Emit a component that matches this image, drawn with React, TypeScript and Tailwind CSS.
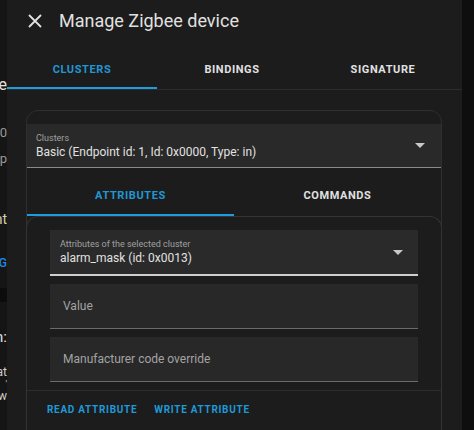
import React from "react";

function LeftStrip() {
  return (
    <div className="w-[7px] shrink-0 overflow-hidden bg-[#151515] flex flex-col items-end">
      <div className="h-[76px] shrink-0" />
      <div className="h-[18px] shrink-0 flex items-center justify-end text-[16px] text-[#e1e1e1] whitespace-nowrap">Title e</div>
      <div className="h-[30px] shrink-0 border-b border-[#222]" />
      <div className="h-[18px] shrink-0 flex items-center justify-end text-[13px] text-[#9a9a9a] whitespace-nowrap">x0</div>
      <div className="h-[8px] shrink-0" />
      <div className="h-[18px] shrink-0 flex items-center justify-end text-[13px] text-[#9a9a9a] whitespace-nowrap">op</div>
      <div className="h-[42px] shrink-0 border-b border-[#222]" />
      <div className="h-[18px] shrink-0 flex items-center justify-end text-[14px] text-[#d8cfae] whitespace-nowrap">ght</div>
      <div className="h-[26px] shrink-0 border-b border-[#222]" />
      <div className="h-[18px] shrink-0 flex items-center justify-end text-[12px] font-medium text-[#1e88e5] whitespace-nowrap">NG</div>
      <div className="h-[16px] shrink-0" />
      <div className="h-[14px] shrink-0 w-full bg-[#0c0c0c]" />
      <div className="h-[26px] shrink-0" />
      <div className="h-[18px] shrink-0 flex items-center justify-end text-[15px] text-[#e1e1e1] whitespace-nowrap">on:</div>
      <div className="h-[19px] shrink-0" />
      <div className="h-[14px] shrink-0 flex items-center justify-end text-[12px] leading-[14px] text-[#cfcfcf] whitespace-nowrap">at</div>
      <div className="h-[10px] shrink-0 flex items-start justify-end text-[9px] leading-[10px] text-[#cfcfcf] whitespace-nowrap">'</div>
      <div className="h-[14px] shrink-0 flex items-center justify-end text-[12px] leading-[14px] text-[#cfcfcf] whitespace-nowrap">w</div>
    </div>
  );
}

function Arrow() {
  return (
    <svg width="10" height="5" viewBox="0 0 10 5" className="shrink-0">
      <path d="M0 0 L10 0 L5 5 Z" fill="#c8c8c8" />
    </svg>
  );
}

export default function App() {
  return (
    <div className="flex w-[474px] h-[430px] overflow-hidden bg-[#0e0e0e] font-['Roboto',sans-serif]">
      <LeftStrip />
      <div className="w-[455px] shrink-0 bg-[#1c1c1c] flex flex-col">
        {/* header */}
        <div className="h-[50px] shrink-0 flex items-start pt-[9px]">
          <div className="w-[54px] pl-[2px] h-[24px] flex items-center justify-center">
            <svg width="14" height="14" viewBox="0 0 14 14">
              <path d="M1 1 L13 13 M13 1 L1 13" stroke="#e1e1e1" strokeWidth="1.8" />
            </svg>
          </div>
          <div className="text-[18px] leading-[24px] text-[#e1e1e1] -ml-[2px]">Manage Zigbee device</div>
        </div>
        {/* tabs */}
        <div className="h-[40px] shrink-0 flex border-b border-[#2c2c2c]">
          <div className="w-[150px] flex flex-col">
            <div className="flex-1 flex items-center justify-center pt-[3px] text-[11px] font-bold tracking-[0.6px] text-[#2196d3]">CLUSTERS</div>
            <div className="h-[2px] bg-[#1d9ddb]" />
          </div>
          <div className="w-[150px] flex items-center justify-center text-[11px] font-bold tracking-[0.6px] text-[#e1e1e1] pt-[1px]">BINDINGS</div>
          <div className="w-[152px] flex items-center justify-center text-[11px] font-bold tracking-[0.6px] text-[#e1e1e1] pt-[1px]">SIGNATURE</div>
        </div>
        {/* content */}
        <div className="pt-[20px] pl-[19px]">
          <div className="w-[416px] h-[400px] border border-[#2f2f2f] rounded-[12px] pt-[13px] flex flex-col">
            {/* clusters select */}
            <div className="h-[44px] shrink-0 bg-[#292929] border-b border-[#8a8a8a] flex items-center pl-[9px] pr-[16px]">
              <div className="flex-1 flex flex-col">
                <div className="text-[9px] leading-[12px] text-[#a0a0a0]">Clusters</div>
                <div className="text-[12px] leading-[16px] text-[#e1e1e1]">Basic (Endpoint id: 1, Id: 0x0000, Type: in)</div>
              </div>
              <Arrow />
            </div>
            {/* sub tabs */}
            <div className="h-[48px] shrink-0 flex">
              <div className="w-[207px] flex flex-col">
                <div className="flex-1 flex items-center justify-center pt-[10px] text-[11px] font-bold tracking-[0.6px] text-[#2196d3]">ATTRIBUTES</div>
                <div className="h-[2px] bg-[#1d9ddb]" />
              </div>
              <div className="w-[207px] flex items-center justify-center pt-[8px] text-[11px] font-bold tracking-[0.6px] text-[#e1e1e1]">COMMANDS</div>
            </div>
            {/* inner card */}
            <div className="-mx-px flex-1 border-t border-x border-[#333333] rounded-t-[12px] flex flex-col">
              <div className="px-[23px] pt-[13px] flex flex-col gap-[8px]">
                <div className="h-[46px] bg-[#2a2a2a] border-b-2 border-[#cfcfcf] flex items-center pl-[10px] pr-[15px]">
                  <div className="flex-1 flex flex-col">
                    <div className="text-[9px] leading-[12px] text-[#a0a0a0]">Attributes of the selected cluster</div>
                    <div className="text-[12px] leading-[16px] text-[#e1e1e1]">alarm_mask (id: 0x0013)</div>
                  </div>
                  <Arrow />
                </div>
                <div className="h-[45px] bg-[#282828] border-b border-[#6b6b6b] flex items-center pl-[13px] text-[12px] text-[#a3a3a3]">Value</div>
                <div className="h-[45px] bg-[#282828] border-b border-[#6b6b6b] flex items-center pl-[13px] text-[12px] text-[#a3a3a3]">Manufacturer code override</div>
              </div>
              <div className="mt-[8px] border-t border-[#2e2e2e] h-[38px] flex items-center pl-[20px] gap-[17px] text-[10px] font-bold tracking-[0.7px] text-[#1e9ad8]">
                <span>READ ATTRIBUTE</span>
                <span>WRITE ATTRIBUTE</span>
              </div>
            </div>
          </div>
        </div>
      </div>
      <div className="flex-1 bg-[#0e0e0e]" />
    </div>
  );
}
